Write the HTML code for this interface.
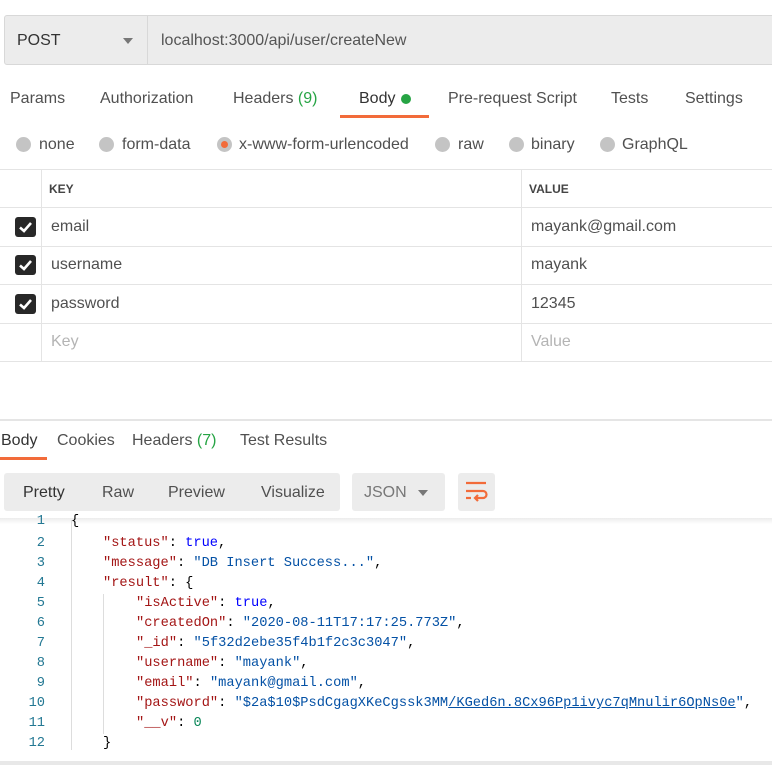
<!DOCTYPE html>
<html><head><meta charset="utf-8"><style>
*{margin:0;padding:0;box-sizing:border-box}
body{width:772px;height:765px;overflow:hidden;background:#fff;font-family:"Liberation Sans",sans-serif;font-size:16px;color:#505050;position:relative}
.a{position:absolute;white-space:nowrap}
.mono{font-family:"Liberation Mono",monospace;font-size:13.7px}
.k{color:#a31515}.s{color:#0451a5}.b{color:#0000ff}.n{color:#098658}.p{color:#000}
.ln{position:absolute;left:0;width:45px;text-align:right;color:#237893;font-family:"Liberation Mono",monospace;font-size:13.7px}
.rad{position:absolute;width:15px;height:15px;border-radius:50%;background:#c4c4c4;top:137px}
</style></head><body>
<div class="a" style="left:4px;top:15px;width:780px;height:50px;background:#ececec;border:1px solid #d8d8d8;border-radius:3px"></div>
<div class="a" style="left:147px;top:16px;width:1px;height:48px;background:#d8d8d8"></div>
<div class="a" style="left:17px;top:32px;color:#333">POST</div>
<div class="a" style="left:123px;top:38px;width:0;height:0;border-left:5px solid transparent;border-right:5px solid transparent;border-top:6px solid #777"></div>
<div class="a" style="left:161px;top:32px;color:#555">localhost:3000/api/user/createNew</div>

<div class="a" style="left:10px;top:90px">Params</div>
<div class="a" style="left:100px;top:90px">Authorization</div>
<div class="a" style="left:233px;top:90px">Headers <span style="color:#26a444">(9)</span></div>
<div class="a" style="left:359px;top:90px;color:#333">Body</div>
<div class="a" style="left:401px;top:94px;width:10px;height:10px;border-radius:50%;background:#26a444"></div>
<div class="a" style="left:340px;top:115px;width:89px;height:3px;background:#f26b3a"></div>
<div class="a" style="left:448px;top:90px">Pre-request Script</div>
<div class="a" style="left:611px;top:90px">Tests</div>
<div class="a" style="left:685px;top:90px">Settings</div>

<div class="rad" style="left:16px"></div><div class="a" style="left:39px;top:136px">none</div>
<div class="rad" style="left:99px"></div><div class="a" style="left:122px;top:136px">form-data</div>
<div class="rad" style="left:217px"></div><div class="a" style="left:221px;top:141px;width:7px;height:7px;border-radius:50%;background:#f26b3a"></div><div class="a" style="left:239px;top:136px">x-www-form-urlencoded</div>
<div class="rad" style="left:435px"></div><div class="a" style="left:458px;top:136px">raw</div>
<div class="rad" style="left:509px"></div><div class="a" style="left:531px;top:136px">binary</div>
<div class="rad" style="left:600px"></div><div class="a" style="left:622px;top:136px">GraphQL</div>

<div class="a" style="left:0;top:169px;width:772px;height:1px;background:#e4e4e4"></div>
<div class="a" style="left:0;top:207px;width:772px;height:1px;background:#e4e4e4"></div>
<div class="a" style="left:0;top:246px;width:772px;height:1px;background:#e4e4e4"></div>
<div class="a" style="left:0;top:284px;width:772px;height:1px;background:#e4e4e4"></div>
<div class="a" style="left:0;top:323px;width:772px;height:1px;background:#e4e4e4"></div>
<div class="a" style="left:0;top:361px;width:772px;height:1px;background:#e4e4e4"></div>
<div class="a" style="left:41px;top:169px;width:1px;height:192px;background:#e4e4e4"></div>
<div class="a" style="left:521px;top:169px;width:1px;height:192px;background:#e4e4e4"></div>
<div class="a" style="left:49px;top:182px;font-size:12px;font-weight:bold;color:#444">KEY</div>
<div class="a" style="left:529px;top:182px;font-size:12px;font-weight:bold;color:#444">VALUE</div>
<svg class="a" style="left:15px;top:217px" width="21" height="20"><rect width="21" height="20" rx="3" fill="#282828"/><path d="M5 10.5l4 3.5 7-8" stroke="#fff" stroke-width="2.6" fill="none"/></svg>
<svg class="a" style="left:15px;top:255px" width="21" height="20"><rect width="21" height="20" rx="3" fill="#282828"/><path d="M5 10.5l4 3.5 7-8" stroke="#fff" stroke-width="2.6" fill="none"/></svg>
<svg class="a" style="left:15px;top:294px" width="21" height="20"><rect width="21" height="20" rx="3" fill="#282828"/><path d="M5 10.5l4 3.5 7-8" stroke="#fff" stroke-width="2.6" fill="none"/></svg>
<div class="a" style="left:51px;top:218px">email</div><div class="a" style="left:531px;top:218px">mayank@gmail.com</div>
<div class="a" style="left:51px;top:256px">username</div><div class="a" style="left:531px;top:256px">mayank</div>
<div class="a" style="left:51px;top:295px">password</div><div class="a" style="left:531px;top:295px">12345</div>
<div class="a" style="left:51px;top:333px;color:#b4b4b4">Key</div><div class="a" style="left:531px;top:333px;color:#b4b4b4">Value</div>

<div class="a" style="left:0;top:419px;width:772px;height:2px;background:#e5e5e5"></div>
<div class="a" style="left:1px;top:432px;color:#333">Body</div>
<div class="a" style="left:0;top:457px;width:47px;height:3px;background:#f26b3a"></div>
<div class="a" style="left:57px;top:432px">Cookies</div>
<div class="a" style="left:132px;top:432px">Headers <span style="color:#26a444">(7)</span></div>
<div class="a" style="left:240px;top:432px">Test Results</div>

<div class="a" style="left:4px;top:473px;width:336px;height:38px;background:#ececec;border-radius:3px"></div>
<div class="a" style="left:23px;top:484px;color:#333">Pretty</div>
<div class="a" style="left:102px;top:484px">Raw</div>
<div class="a" style="left:168px;top:484px">Preview</div>
<div class="a" style="left:261px;top:484px">Visualize</div>
<div class="a" style="left:352px;top:473px;width:93px;height:38px;background:#ececec;border-radius:3px"></div>
<div class="a" style="left:364px;top:484px;color:#777">JSON</div>
<div class="a" style="left:418px;top:490px;width:0;height:0;border-left:5px solid transparent;border-right:5px solid transparent;border-top:6px solid #777"></div>
<div class="a" style="left:458px;top:473px;width:37px;height:38px;background:#ececec;border-radius:3px"></div>
<svg class="a" style="left:458px;top:473px" width="37" height="38"><g stroke="#f26b3a" stroke-width="2.2" fill="none"><path d="M8 10h20"/><path d="M8 18h17a3.5 3.5 0 0 1 0 7h-7"/><path d="M20 22l-3 3 3 3"/><path d="M8 25h5"/></g></svg>

<div class="a" style="left:0;top:518px;width:772px;height:6px;background:linear-gradient(#ececec,#fff)"></div>
<div class="a" style="left:71px;top:520px;width:1px;height:230px;background:#ddd"></div>
<div class="a" style="left:103px;top:594px;width:1px;height:140px;background:#ddd"></div>
<div class="a" style="left:0;top:761px;width:772px;height:4px;background:#e8e8e8"></div>

<div class="ln" style="top:514px">1</div>
<div class="a mono p" style="left:71px;top:514px">{</div>
<div class="ln" style="top:536px">2</div><div class="a mono" style="left:103px;top:536px"><span class="k">"status"</span><span class="p">: </span><span class="b">true</span><span class="p">,</span></div>
<div class="ln" style="top:556px">3</div><div class="a mono" style="left:103px;top:556px"><span class="k">"message"</span><span class="p">: </span><span class="s">"DB Insert Success..."</span><span class="p">,</span></div>
<div class="ln" style="top:576px">4</div><div class="a mono" style="left:103px;top:576px"><span class="k">"result"</span><span class="p">: {</span></div>
<div class="ln" style="top:596px">5</div><div class="a mono" style="left:136px;top:596px"><span class="k">"isActive"</span><span class="p">: </span><span class="b">true</span><span class="p">,</span></div>
<div class="ln" style="top:616px">6</div><div class="a mono" style="left:136px;top:616px"><span class="k">"createdOn"</span><span class="p">: </span><span class="s">"2020-08-11T17:17:25.773Z"</span><span class="p">,</span></div>
<div class="ln" style="top:636px">7</div><div class="a mono" style="left:136px;top:636px"><span class="k">"_id"</span><span class="p">: </span><span class="s">"5f32d2ebe35f4b1f2c3c3047"</span><span class="p">,</span></div>
<div class="ln" style="top:656px">8</div><div class="a mono" style="left:136px;top:656px"><span class="k">"username"</span><span class="p">: </span><span class="s">"mayank"</span><span class="p">,</span></div>
<div class="ln" style="top:676px">9</div><div class="a mono" style="left:136px;top:676px"><span class="k">"email"</span><span class="p">: </span><span class="s">"mayank@gmail.com"</span><span class="p">,</span></div>
<div class="ln" style="top:696px">10</div><div class="a mono" style="left:136px;top:696px"><span class="k">"password"</span><span class="p">: </span><span class="s">"$2a$10$PsdCgagXKeCgssk3MM<u>/KGed6n.8Cx96Pp1ivyc7qMnulir6OpNs0e</u>"</span><span class="p">,</span></div>
<div class="ln" style="top:716px">11</div><div class="a mono" style="left:136px;top:716px"><span class="k">"__v"</span><span class="p">: </span><span class="n">0</span></div>
<div class="ln" style="top:736px">12</div><div class="a mono p" style="left:103px;top:736px">}</div>
</body></html>
